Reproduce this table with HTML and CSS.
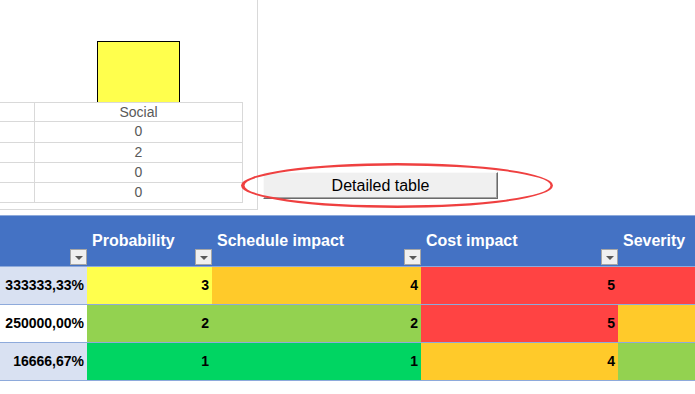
FILE: index.html
```html
<!DOCTYPE html>
<html lang="en">
<head>
  <meta charset="UTF-8" />
  <title>Risk matrix</title>
  <link rel="stylesheet" href="styles.css">
</head>
<body>
  <div class="top">
    <div class="chart-panel">
      <div class="bar"></div>
      <div class="mini">
        <div class="mini-row"><div></div><div class="val">Social</div></div>
        <div class="mini-row tall"><div></div><div class="val">0</div></div>
        <div class="mini-row"><div></div><div class="val">2</div></div>
        <div class="mini-row"><div></div><div class="val">0</div></div>
        <div class="mini-row"><div></div><div class="val">0</div></div>
      </div>
    </div>
    <div class="action">
      <div class="button-wrap">
        <button class="detail-btn">Detailed table</button>
        <svg class="ring" viewBox="0 0 313 46" width="313" height="46">
          <path fill="#ef4040" fill-rule="evenodd" d="M0,22.5 a156,22.5 0 1,0 312,0 a156,22.5 0 1,0 -312,0 Z M3.5,22.5 a153,20 0 1,0 306,0 a153,20 0 1,0 -306,0 Z"/>
        </svg>
      </div>
    </div>
  </div>

  <div class="risk">
    <div class="row head">
      <div class="cell"><span></span><i class="filter"></i></div>
      <div class="cell"><span>Probability</span><i class="filter"></i></div>
      <div class="cell"><span>Schedule impact</span><i class="filter"></i></div>
      <div class="cell"><span>Cost impact</span><i class="filter"></i></div>
      <div class="cell"><span>Severity</span><i class="filter"></i></div>
    </div>
    <div class="row">
      <div class="cell pct band">333333,33%</div>
      <div class="cell yellow">3</div>
      <div class="cell orange">4</div>
      <div class="cell red">5</div>
      <div class="cell red"></div>
    </div>
    <div class="row">
      <div class="cell pct">250000,00%</div>
      <div class="cell lime">2</div>
      <div class="cell lime">2</div>
      <div class="cell red">5</div>
      <div class="cell orange"></div>
    </div>
    <div class="row last">
      <div class="cell pct band">16666,67%</div>
      <div class="cell green">1</div>
      <div class="cell green">1</div>
      <div class="cell orange">4</div>
      <div class="cell lime"></div>
    </div>
  </div>
</body>
</html>
```

FILE: styles.css
```css
body {
  margin: 0;
  width: 695px;
  height: 394px;
  overflow: hidden;
  background-color: #fff;
  font-family: "Liberation Sans", Arial, sans-serif;
}
.top {
  display: flex;
  height: 215px;
}
.chart-panel {
  box-sizing: border-box;
  width: 258px;
  height: 210px;
  padding-top: 41px;
  border-right: 1px solid #d9d9d9;
  border-bottom: 1px solid #d9d9d9;
}
.bar {
  margin-left: 97px;
  width: 81px;
  height: 60px;
  border: 1px solid #000;
  border-bottom: none;
  background-color: #ffff4d;
}
.mini {
  width: 243px;
  border-top: 1px solid #d9d9d9;
}
.mini-row {
  display: grid;
  grid-template-columns: 34px 209px;
  height: 19px;
  border-bottom: 1px solid #d9d9d9;
}
.mini-row:first-child {
  height: 18px;
}
.mini-row.tall {
  height: 20px;
}
.mini-row .val {
  border-left: 1px solid #d9d9d9;
  border-right: 1px solid #d9d9d9;
  color: #595959;
  font-size: 14px;
  text-align: center;
  line-height: 19px;
}
.action {
  padding: 172px 0 0 5px;
}
.button-wrap {
  position: relative;
  width: 235px;
  height: 27px;
}
.detail-btn {
  box-sizing: border-box;
  width: 235px;
  height: 27px;
  padding: 0;
  background-color: #f0f0f0;
  border: 1px solid;
  border-color: #fafafa #6b6b6b #6b6b6b #fafafa;
  box-shadow: inset -1px -1px 0 #a3a3a3;
  font-family: "Liberation Sans", Arial, sans-serif;
  font-size: 16px;
  color: #000;
}
.ring {
  position: absolute;
  left: -22px;
  top: -9px;
  overflow: visible;
}
.risk {
  width: 695px;
}
.row {
  display: grid;
  grid-template-columns: 87px 125px 209px 197px 120px;
  height: 37px;
  border-top: 1px solid #8eaadb;
}
.row.last {
  border-bottom: 1px solid #8eaadb;
}
.row.head {
  height: 50px;
  background-color: #4472c4;
}
.head .cell {
  display: flex;
  justify-content: space-between;
  align-items: center;
  padding-left: 5px;
  color: #fff;
  font-size: 16px;
  font-weight: bold;
  white-space: nowrap;
}
.filter {
  box-sizing: border-box;
  display: flex;
  align-items: center;
  justify-content: center;
  align-self: flex-end;
  flex: none;
  width: 17px;
  height: 16px;
  margin-bottom: 1px;
  background-color: #f0f0f0;
  border: 1px solid #a6a6a6;
}
.filter::after {
  content: "";
  border-left: 4px solid transparent;
  border-right: 4px solid transparent;
  border-top: 4px solid #595959;
  margin-top: 1px;
}
.row .cell {
  box-sizing: border-box;
}
.row:not(.head) .cell {
  padding-right: 3px;
  font-size: 14px;
  font-weight: bold;
  line-height: 37px;
  text-align: right;
  color: #000;
}
.pct {
  background-color: #fff;
}
.pct.band {
  background-color: #d9e1f2;
}
.yellow { background-color: #ffff4d; }
.orange { background-color: #ffca2a; }
.red { background-color: #ff4343; }
.lime { background-color: #93d250; }
.green { background-color: #00d562; }
```
